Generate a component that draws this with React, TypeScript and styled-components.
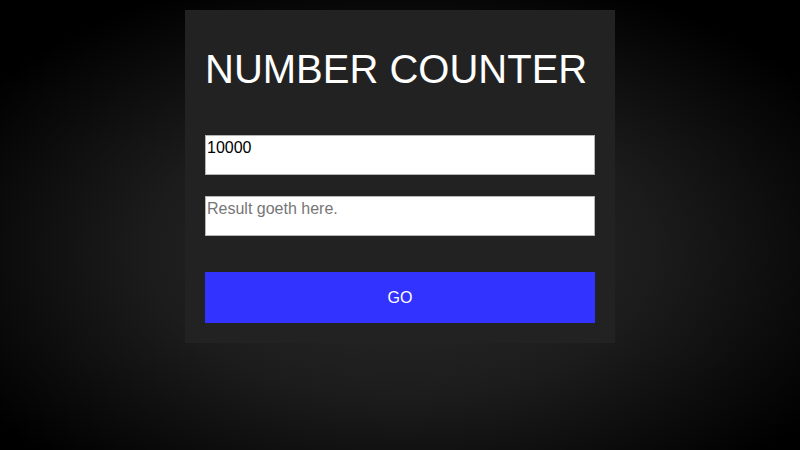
import { useState } from "react"
import styled, { createGlobalStyle } from "styled-components"

const GlobalStyle = createGlobalStyle`
  html, body {
    margin: 0;
    padding: 0;
    height: 100%;
  }
  body {
    background-color: #000000;
    background-image: radial-gradient(ellipse 500px 290px at 50% 56%, #2b2b2b 0%, #1c1c1c 50%, #000000 100%);
    font-family: "Liberation Sans", Arial, sans-serif;
  }
`

const Page = styled.div`
  min-height: 450px;
  display: flex;
  justify-content: center;
  align-items: flex-start;
  padding-top: 10px;
  box-sizing: border-box;
`

const Card = styled.div`
  width: 430px;
  box-sizing: border-box;
  padding: 36px 20px 20px;
  background: #222222;
  display: flex;
  flex-direction: column;
`

const Title = styled.h1`
  margin: 0 0 43px;
  font-size: 40px;
  line-height: 46px;
  font-weight: 400;
  color: #ffffff;
  white-space: nowrap;
`

const Field = styled.textarea<{ $gap: number }>`
  display: block;
  width: 100%;
  height: 40px;
  box-sizing: border-box;
  margin: 0 0 ${(p) => p.$gap}px;
  padding: 3px 1px 1px;
  border: 1px solid #b5b5b5;
  border-radius: 0;
  background: #ffffff;
  color: #000000;
  font-family: "Liberation Sans", Arial, sans-serif;
  font-size: 16px;
  line-height: normal;
  resize: none;
  overflow: hidden;
  outline: none;

  &::placeholder {
    color: #767676;
  }
`

const GoButton = styled.button`
  width: 100%;
  height: 51px;
  border: none;
  border-radius: 0;
  background: #3333ff;
  color: #ffffff;
  font-family: "Liberation Sans", Arial, sans-serif;
  font-size: 16px;
  cursor: pointer;
`

export default function App() {
  const [value, setValue] = useState("10000")
  const [result, setResult] = useState("")

  const count = () => {
    const n = parseInt(value, 10)
    if (isNaN(n)) return
    setResult(String(n))
  }

  return (
    <>
      <GlobalStyle />
      <Page>
        <Card>
          <Title>NUMBER COUNTER</Title>
          <Field $gap={21} value={value} onChange={(e) => setValue(e.target.value)} />
          <Field $gap={36} value={result} readOnly placeholder="Result goeth here." />
          <GoButton onClick={count}>GO</GoButton>
        </Card>
      </Page>
    </>
  )
}
